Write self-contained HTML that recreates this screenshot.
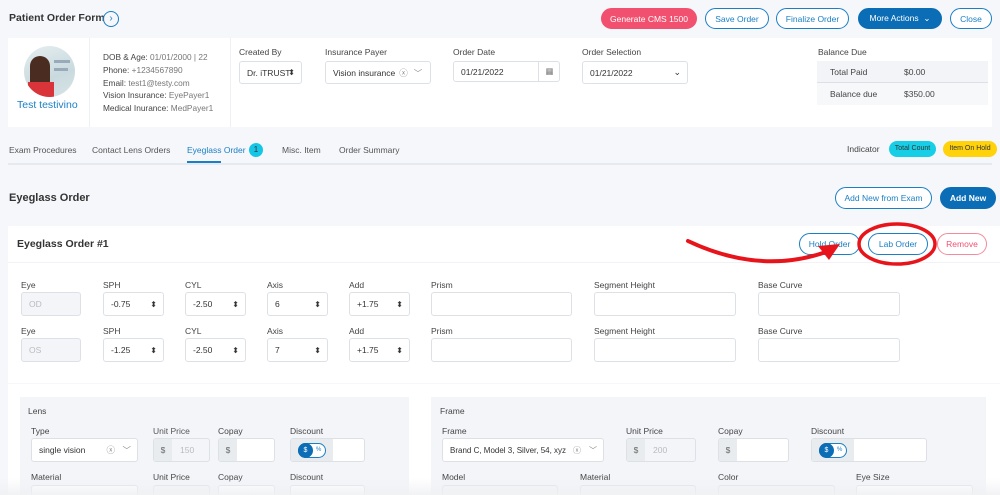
<!DOCTYPE html>
<html><head><meta charset="utf-8"><style>
*{box-sizing:border-box;margin:0;padding:0}
html,body{width:1000px;height:495px;overflow:hidden}
body{background:#f5f7fb;font-family:"Liberation Sans",sans-serif;color:#333;position:relative;font-size:9px}
.a{position:absolute;white-space:nowrap}
.btn{position:absolute;height:21px;border-radius:11px;border:1px solid #1a7fc4;color:#1a7fc4;font-size:8.5px;display:flex;align-items:center;justify-content:center;background:#fff}
.inp{position:absolute;background:#fff;border:1px solid #dde1e6;border-radius:3px;height:24px;font-size:8.5px;display:flex;align-items:center;padding-left:7px;color:#333;overflow:hidden}
.lbl{position:absolute;font-size:8.5px;color:#444;white-space:nowrap}
.sp::after{content:"⬍";position:absolute;right:6px;font-size:8px;color:#333}
.dis{background:#f3f5f8;color:#bbb}
.pre{position:absolute;left:0;top:0;bottom:0;width:18px;background:#e9ecef;display:flex;align-items:center;justify-content:center;color:#666}
</style></head><body>
<div class="a" style="left:9px;top:12px;font-size:10.5px;font-weight:bold;color:#333">Patient Order Form</div>
<div class="a" style="left:103px;top:11px;width:16px;height:16px;border:1px solid #1a7fc4;border-radius:50%;color:#1a7fc4;font-size:10px;text-align:center;line-height:14px">›</div>
<div class="btn" style="left:601px;top:8px;width:96px;background:#f2506f;border-color:#f2506f;color:#fff">Generate CMS 1500</div>
<div class="btn" style="left:705px;top:8px;width:64px;border-width:1.5px">Save Order</div>
<div class="btn" style="left:776px;top:8px;width:73px">Finalize Order</div>
<div class="btn" style="left:858px;top:8px;width:84px;background:#0b6db5;border-color:#0b6db5;color:#fff">More Actions &nbsp;⌄</div>
<div class="btn" style="left:950px;top:8px;width:42px">Close</div>

<div class="a" style="left:8px;top:38px;width:984px;height:89px;background:#fff"></div>
<div class="a" style="left:89px;top:38px;width:1px;height:89px;background:#eef0f3"></div>
<div class="a" style="left:230px;top:38px;width:1px;height:89px;background:#eef0f3"></div>
<div class="a" style="left:24px;top:46px;width:51px;height:51px;border-radius:50%;overflow:hidden;background:linear-gradient(160deg,#e6eef0,#c9dade 60%,#d8e4e6)">
<div class="a" style="left:6px;top:10px;width:20px;height:34px;border-radius:10px 10px 4px 4px;background:#4a2c20"></div>
<div class="a" style="left:4px;top:36px;width:26px;height:15px;background:#d8343a"></div>
<div class="a" style="left:30px;top:14px;width:16px;height:3px;background:#9ab"></div>
<div class="a" style="left:30px;top:22px;width:14px;height:3px;background:#9ab"></div>
</div>
<div class="a" style="left:17px;top:99px;font-size:10.5px;color:#1a7fc4">Test testivino</div>
<div class="a" style="left:103px;top:51px;line-height:12.8px;font-size:8.3px;color:#444">DOB &amp; Age: <span style="color:#777">01/01/2000 | 22</span><br>Phone: <span style="color:#777">+1234567890</span><br>Email: <span style="color:#777">test1@testy.com</span><br>Vision Insurance: <span style="color:#777">EyePayer1</span><br>Medical Inurance: <span style="color:#777">MedPayer1</span></div>
<div class="lbl" style="left:239px;top:47px">Created By</div>
<div class="inp sp" style="left:239px;top:61px;width:63px;height:23px">Dr. iTRUST</div>
<div class="lbl" style="left:325px;top:47px">Insurance Payer</div>
<div class="inp" style="left:325px;top:61px;width:106px;height:23px">Vision insurance <span style="margin-left:4px;color:#888">ⓧ</span><span style="margin-left:6px;color:#888">﹀</span></div>
<div class="lbl" style="left:453px;top:47px">Order Date</div>
<div class="inp" style="left:453px;top:61px;width:107px;height:21px">01/21/2022<span style="position:absolute;left:84px;top:0;bottom:0;border-left:1px solid #dde1e6;width:22px;text-align:center;line-height:19px;color:#777">▦</span></div>
<div class="lbl" style="left:582px;top:47px">Order Selection</div>
<div class="inp" style="left:582px;top:61px;width:106px;height:23px">01/21/2022<span style="position:absolute;right:6px;font-size:9px">⌄</span></div>
<div class="lbl" style="left:818px;top:47px">Balance Due</div>
<div class="a" style="left:817px;top:61px;width:171px;height:22px;background:#f2f4f7;border-bottom:1px solid #dde1e6"></div>
<div class="a" style="left:817px;top:83px;width:171px;height:22px;background:#f7f8fa"></div>
<div class="lbl" style="left:830px;top:67px">Total Paid</div><div class="lbl" style="left:904px;top:67px">$0.00</div>
<div class="lbl" style="left:830px;top:89px">Balance due</div><div class="lbl" style="left:904px;top:89px">$350.00</div>

<div class="lbl" style="left:9px;top:145px;color:#555">Exam Procedures</div>
<div class="lbl" style="left:92px;top:145px;color:#555">Contact Lens Orders</div>
<div class="lbl" style="left:187px;top:145px;color:#1a7fc4">Eyeglass Order</div>
<div class="a" style="left:249px;top:143px;width:14px;height:14px;border-radius:50%;background:#16c6e6;font-size:8px;text-align:center;line-height:14px">1</div>
<div class="lbl" style="left:282px;top:145px;color:#555">Misc. Item</div>
<div class="lbl" style="left:339px;top:145px;color:#555">Order Summary</div>
<div class="a" style="left:8px;top:163px;width:984px;height:2px;background:#e6e9ee"></div>
<div class="a" style="left:187px;top:161px;width:34px;height:2px;background:#1a7fc4"></div>
<div class="lbl" style="left:847px;top:144px;color:#444">Indicator</div>
<div class="a" style="left:889px;top:141px;width:47px;height:16px;border-radius:8px;background:#16cfe6;font-size:7px;text-align:center;line-height:16px">Total Count</div>
<div class="a" style="left:943px;top:141px;width:54px;height:16px;border-radius:8px;background:#ffd20a;font-size:7px;text-align:center;line-height:16px">Item On Hold</div>

<div class="a" style="left:9px;top:192px;font-size:11px;font-weight:bold;color:#333">Eyeglass Order</div>
<div class="btn" style="left:835px;top:187px;width:97px;height:22px">Add New from Exam</div>
<div class="btn" style="left:940px;top:187px;width:56px;height:22px;background:#0b6db5;border-color:#0b6db5;color:#fff;font-weight:bold">Add New</div>

<div class="a" style="left:8px;top:226px;width:992px;height:157px;background:#fff"></div>
<div class="a" style="left:8px;top:262px;width:992px;height:1px;background:#f0f2f5"></div>
<div class="a" style="left:17px;top:238px;font-size:10.5px;font-weight:bold;color:#333">Eyeglass Order #1</div>
<div class="btn" style="left:799px;top:233px;width:61px;height:22px">Hold Order</div>
<div class="btn" style="left:868px;top:233px;width:60px;height:22px">Lab Order</div>
<div class="btn" style="left:937px;top:233px;width:50px;height:22px;border-color:#f58a9c;color:#f2506f">Remove</div>

<div class="lbl" style="left:21px;top:280px">Eye</div><div class="lbl" style="left:103px;top:280px">SPH</div><div class="lbl" style="left:185px;top:280px">CYL</div><div class="lbl" style="left:267px;top:280px">Axis</div><div class="lbl" style="left:349px;top:280px">Add</div><div class="lbl" style="left:431px;top:280px">Prism</div><div class="lbl" style="left:594px;top:280px">Segment Height</div><div class="lbl" style="left:758px;top:280px">Base Curve</div>
<div class="inp dis" style="left:21px;top:292px;width:60px">OD</div>
<div class="inp sp" style="left:103px;top:292px;width:61px">-0.75</div>
<div class="inp sp" style="left:185px;top:292px;width:61px">-2.50</div>
<div class="inp sp" style="left:267px;top:292px;width:61px">6</div>
<div class="inp sp" style="left:349px;top:292px;width:61px">+1.75</div>
<div class="inp" style="left:431px;top:292px;width:141px"></div>
<div class="inp" style="left:594px;top:292px;width:142px"></div>
<div class="inp" style="left:758px;top:292px;width:142px"></div>
<div class="lbl" style="left:21px;top:326px">Eye</div><div class="lbl" style="left:103px;top:326px">SPH</div><div class="lbl" style="left:185px;top:326px">CYL</div><div class="lbl" style="left:267px;top:326px">Axis</div><div class="lbl" style="left:349px;top:326px">Add</div><div class="lbl" style="left:431px;top:326px">Prism</div><div class="lbl" style="left:594px;top:326px">Segment Height</div><div class="lbl" style="left:758px;top:326px">Base Curve</div>
<div class="inp dis" style="left:21px;top:338px;width:60px">OS</div>
<div class="inp sp" style="left:103px;top:338px;width:61px">-1.25</div>
<div class="inp sp" style="left:185px;top:338px;width:61px">-2.50</div>
<div class="inp sp" style="left:267px;top:338px;width:61px">7</div>
<div class="inp sp" style="left:349px;top:338px;width:61px">+1.75</div>
<div class="inp" style="left:431px;top:338px;width:141px"></div>
<div class="inp" style="left:594px;top:338px;width:142px"></div>
<div class="inp" style="left:758px;top:338px;width:142px"></div>

<div class="a" style="left:8px;top:384px;width:992px;height:111px;background:#fff"></div>
<div class="a" style="left:20px;top:397px;width:389px;height:98px;background:#f3f5f9"></div>
<div class="a" style="left:431px;top:397px;width:555px;height:98px;background:#f3f5f9"></div>
<div class="lbl" style="left:28px;top:406px">Lens</div>
<div class="lbl" style="left:31px;top:426px">Type</div><div class="lbl" style="left:153px;top:426px;color:#555">Unit Price</div><div class="lbl" style="left:218px;top:426px">Copay</div><div class="lbl" style="left:290px;top:426px">Discount</div>
<div class="inp" style="left:31px;top:438px;width:107px;height:24px">single vision<span style="position:absolute;right:22px;color:#888">ⓧ</span><span style="position:absolute;right:6px;color:#888">﹀</span></div>
<div class="inp dis" style="left:153px;top:438px;width:57px;padding-left:26px"><span class="pre">$</span>150</div>
<div class="inp" style="left:218px;top:438px;width:57px"><span class="pre">$</span></div>
<div class="inp" style="left:290px;top:438px;width:75px;background:#fff"><span style="position:absolute;left:0;top:0;bottom:0;width:42px;background:#e9ecef"></span><span style="position:absolute;left:7px;top:4px;width:28px;height:15px;border-radius:8px;border:1px solid #1a7fc4;background:#fff"></span><span style="position:absolute;left:7px;top:4px;width:15px;height:15px;border-radius:50%;background:#0b6db5;color:#fff;font-size:7px;text-align:center;line-height:15px">$</span><span style="position:absolute;left:25px;top:4px;font-size:6px;color:#1a7fc4;line-height:15px">%</span></div>
<div class="lbl" style="left:31px;top:472px">Material</div><div class="lbl" style="left:153px;top:472px">Unit Price</div><div class="lbl" style="left:218px;top:472px">Copay</div><div class="lbl" style="left:290px;top:472px">Discount</div>
<div class="inp" style="left:31px;top:485px;width:107px"></div><div class="inp dis" style="left:153px;top:485px;width:57px"></div><div class="inp" style="left:218px;top:485px;width:57px"></div><div class="inp" style="left:290px;top:485px;width:75px"></div>

<div class="lbl" style="left:440px;top:406px">Frame</div>
<div class="lbl" style="left:442px;top:426px">Frame</div><div class="lbl" style="left:626px;top:426px">Unit Price</div><div class="lbl" style="left:718px;top:426px">Copay</div><div class="lbl" style="left:811px;top:426px">Discount</div>
<div class="inp" style="left:442px;top:438px;width:162px;font-size:8px">Brand C, Model 3, Silver, 54, xyz<span style="position:absolute;right:22px;color:#888">ⓧ</span><span style="position:absolute;right:6px;color:#888">﹀</span></div>
<div class="inp dis" style="left:626px;top:438px;width:70px;padding-left:26px"><span class="pre">$</span>200</div>
<div class="inp" style="left:718px;top:438px;width:71px"><span class="pre">$</span></div>
<div class="inp" style="left:811px;top:438px;width:116px"><span style="position:absolute;left:0;top:0;bottom:0;width:42px;background:#e9ecef"></span><span style="position:absolute;left:7px;top:4px;width:28px;height:15px;border-radius:8px;border:1px solid #1a7fc4;background:#fff"></span><span style="position:absolute;left:7px;top:4px;width:15px;height:15px;border-radius:50%;background:#0b6db5;color:#fff;font-size:7px;text-align:center;line-height:15px">$</span><span style="position:absolute;left:25px;top:4px;font-size:6px;color:#1a7fc4;line-height:15px">%</span></div>
<div class="lbl" style="left:442px;top:472px">Model</div><div class="lbl" style="left:580px;top:472px">Material</div><div class="lbl" style="left:718px;top:472px">Color</div><div class="lbl" style="left:856px;top:472px">Eye Size</div>
<div class="inp dis" style="left:442px;top:485px;width:116px"></div><div class="inp dis" style="left:580px;top:485px;width:116px"></div><div class="inp dis" style="left:718px;top:485px;width:117px"></div><div class="inp" style="left:856px;top:485px;width:117px"></div>
<div class="a" style="left:0;top:478px;width:1000px;height:17px;background:linear-gradient(rgba(245,246,248,0),rgba(240,241,243,.9))"></div>

<svg class="a" style="left:0;top:0" width="1000" height="495">
<path d="M688 241 Q760 275 826 252" fill="none" stroke="#e8141b" stroke-width="4" stroke-linecap="round"/>
<path d="M818 246 L840 244 L829 260 Z" fill="#e8141b"/>
<ellipse cx="897" cy="244" rx="38" ry="20" fill="none" stroke="#e8141b" stroke-width="3.5"/>
</svg>
</body></html>
